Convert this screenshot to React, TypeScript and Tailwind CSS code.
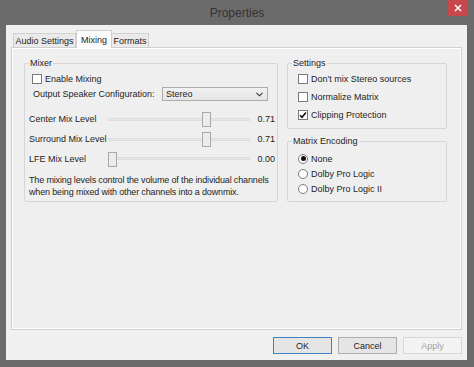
import React from 'react';

function CheckBox({ label, checked }: { label: string; checked?: boolean }) {
  return (
    <div className="flex items-center gap-[3px]">
      <div className="w-[10px] h-[10px] border border-[#7a7a7a] bg-white flex items-center justify-center">
        {checked && (
          <svg width="8" height="8" viewBox="0 0 8 8">
            <path d="M1 4.2 L3 6.2 L7 1.5" fill="none" stroke="#111" strokeWidth="1.6" />
          </svg>
        )}
      </div>
      <span>{label}</span>
    </div>
  );
}

function Radio({ label, checked }: { label: string; checked?: boolean }) {
  return (
    <div className="flex items-center gap-[3px] h-[15px]">
      <div className="w-[10px] h-[10px] rounded-full border border-[#7a7a7a] bg-white flex items-center justify-center">
        {checked && <div className="w-[5px] h-[5px] rounded-full bg-[#111]" />}
      </div>
      <span>{label}</span>
    </div>
  );
}

function SliderRow({ label, value, h }: { label: string; value: number; h: string }) {
  return (
    <div className={`flex items-center ${h}`}>
      <span className="pl-[4px] w-[83px]">{label}</span>
      <div className="relative w-[142px] h-[14px] flex items-center">
        <div className="w-full h-[3px] bg-[#e7e7e7] border border-[#dedede]" />
        <div
          className="absolute top-0 w-[9px] h-[15px] bg-[#ececec] border border-[#a9a9a9]"
          style={{ left: `${Math.round(value * 133)}px` }}
        />
      </div>
      <span className="ml-[7px] w-[18px] text-right">{value.toFixed(2)}</span>
    </div>
  );
}

function Button({ label, variant }: { label: string; variant?: 'default' | 'disabled' }) {
  const cls =
    variant === 'default'
      ? 'border-[#3c84c4] bg-[#e5e5e5] text-[#1e1e1e]'
      : variant === 'disabled'
      ? 'border-[#d8d8d8] bg-[#f3f3f3] text-[#a3a3a3]'
      : 'border-[#adadad] bg-[#e5e5e5] text-[#1e1e1e]';
  return (
    <div className={`w-[59px] h-[17px] border flex items-center justify-center ${cls}`}>{label}</div>
  );
}

export default function App() {
  return (
    <div className="w-[474px] h-[367px] bg-[#6b6b6b] flex flex-col font-['Liberation_Sans',Arial,sans-serif] text-[9px] leading-[12px] text-[#1e1e1e]">
      {/* title bar */}
      <div className="h-[25px] grid grid-cols-[1fr_auto_1fr] items-start">
        <div />
        <div className="pt-[6px] text-[12px] leading-[14px] text-[#333333]">Properties</div>
        <div className="justify-self-end mr-[6px] w-[20px] h-[16px] bg-[#c8474c] flex items-center justify-center">
          <svg width="8" height="8" viewBox="0 0 8 8">
            <path d="M1 1 L7 7 M7 1 L1 7" stroke="#fff" strokeWidth="1.5" />
          </svg>
        </div>
      </div>

      {/* client */}
      <div className="ml-[6px] mr-[7px] h-[335px] bg-[#f0f0f0] flex flex-col px-[5px]">
        {/* tabs */}
        <div className="h-[22px] flex items-end pl-[2px]">
          <div className="h-[14px] w-[63px] border border-b-0 border-[#d0d0d0] bg-[#eaeaea] flex items-center justify-center">
            Audio Settings
          </div>
          <div className="h-[18px] w-[36px] -mb-px border border-b-0 border-[#d0d0d0] bg-[#fbfbfb] flex items-center justify-center relative z-10">
            Mixing
          </div>
          <div className="h-[14px] w-[37px] border border-b-0 border-l-0 border-[#d0d0d0] bg-[#eaeaea] flex items-center justify-center">
            Formats
          </div>
        </div>

        {/* panel */}
        <div className="h-[283px] border border-[#d0d0d0] bg-[#efefef] shadow-[inset_1px_1px_0_#ffffff,inset_-1px_-1px_0_#ffffff] flex gap-[9px] pl-[12px] pt-[9px]">
          {/* Mixer */}
          <fieldset className="w-[254px] h-[145px] border border-[#d6d6d6] rounded-[2px] flex flex-col">
            <legend className="ml-[4px] px-[1px] leading-[12px]">Mixer</legend>
            <div className="pt-[3px] flex flex-col">
              <div className="h-[14px] pl-[7px] flex items-center">
                <CheckBox label="Enable Mixing" />
              </div>
              <div className="h-[16px] flex items-center pl-[8px]">
                <span className="w-[129px]">Output Speaker Configuration:</span>
                <div className="w-[106px] h-[14px] border border-[#acacac] bg-gradient-to-b from-[#f2f2f2] to-[#e5e5e5] flex items-center justify-between pl-[3px] pr-[4px]">
                  <span>Stereo</span>
                  <svg width="7" height="5" viewBox="0 0 7 5">
                    <path d="M0.5 0.8 L3.5 3.8 L6.5 0.8" fill="none" stroke="#333" strokeWidth="1.1" />
                  </svg>
                </div>
              </div>
              <div className="mt-[7px] flex flex-col">
                <SliderRow label="Center Mix Level" value={0.71} h="h-[20px]" />
                <SliderRow label="Surround Mix Level" value={0.71} h="h-[20px]" />
                <SliderRow label="LFE Mix Level" value={0} h="h-[19px]" />
              </div>
              <p className="mt-[7px] pl-[4px] leading-[11.5px] whitespace-nowrap tracking-[-0.15px]">
                The mixing levels control the volume of the individual channels
                <br />
                when being mixed with other channels into a downmix.
              </p>
            </div>
          </fieldset>

          {/* right column */}
          <div className="w-[160px] flex flex-col">
            <fieldset className="h-[72px] border border-[#d6d6d6] rounded-[2px]">
              <legend className="ml-[4px] px-[1px] leading-[12px]">Settings</legend>
              <div className="pt-[1px] pl-[10px] flex flex-col">
                <div className="h-[18px] flex items-center">
                  <CheckBox label="Don't mix Stereo sources" />
                </div>
                <div className="h-[18px] flex items-center">
                  <CheckBox label="Normalize Matrix" />
                </div>
                <div className="h-[18px] flex items-center">
                  <CheckBox label="Clipping Protection" checked />
                </div>
              </div>
            </fieldset>
            <fieldset className="mt-[6px] h-[67px] border border-[#d6d6d6] rounded-[2px]">
              <legend className="ml-[4px] px-[1px] leading-[12px]">Matrix Encoding</legend>
              <div className="pt-[4px] pl-[10px] flex flex-col">
                <Radio label="None" checked />
                <Radio label="Dolby Pro Logic" />
                <Radio label="Dolby Pro Logic II" />
              </div>
            </fieldset>
          </div>
        </div>

        {/* buttons */}
        <div className="mt-[7px] flex justify-end gap-[6px]">
          <Button label="OK" variant="default" />
          <Button label="Cancel" />
          <Button label="Apply" variant="disabled" />
        </div>
      </div>
    </div>
  );
}
